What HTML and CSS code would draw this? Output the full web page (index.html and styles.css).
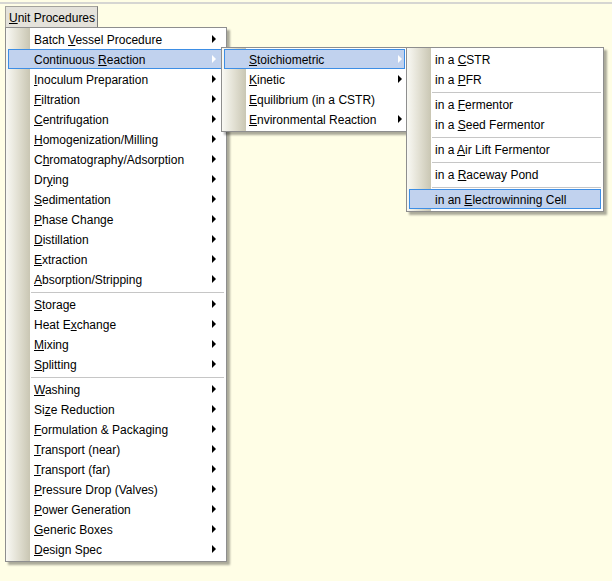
FILE: index.html
```html
<!DOCTYPE html>
<html lang="en">
<head>
    <meta charset="UTF-8">
    <title>Unit Procedures</title>
    <link rel="stylesheet" href="styles.css">
</head>
<body>

<div class="topline"></div>

<div class="menubar">
    <div class="menu-root">
        <span class="menu-title"><u>U</u>nit Procedures</span>

        <ul class="menu main">
            <li class="item sub">Batch <u>V</u>essel Procedure</li>
            <li class="item sub active">Continuous <u>R</u>eaction
                <ul class="menu level2">
                    <li class="item sub active"><u>S</u>toichiometric
                        <ul class="menu level3">
                            <li class="item">in a <u>C</u>STR</li>
                            <li class="item">in a <u>P</u>FR</li>
                            <li class="sep"></li>
                            <li class="item">in a <u>F</u>ermentor</li>
                            <li class="item">in a <u>S</u>eed Fermentor</li>
                            <li class="sep"></li>
                            <li class="item">in a <u>A</u>ir Lift Fermentor</li>
                            <li class="sep"></li>
                            <li class="item">in a <u>R</u>aceway Pond</li>
                            <li class="sep"></li>
                            <li class="item active">in an <u>E</u>lectrowinning Cell</li>
                        </ul>
                    </li>
                    <li class="item sub"><u>K</u>inetic</li>
                    <li class="item"><u>E</u>quilibrium (in a CSTR)</li>
                    <li class="item sub"><u>E</u>nvironmental Reaction</li>
                </ul>
            </li>
            <li class="item sub"><u>I</u>noculum Preparation</li>
            <li class="item sub"><u>F</u>iltration</li>
            <li class="item sub"><u>C</u>entrifugation</li>
            <li class="item sub"><u>H</u>omogenization/Milling</li>
            <li class="item sub">C<u>h</u>romatography/Adsorption</li>
            <li class="item sub">Dr<u>y</u>ing</li>
            <li class="item sub"><u>S</u>edimentation</li>
            <li class="item sub"><u>P</u>hase Change</li>
            <li class="item sub"><u>D</u>istillation</li>
            <li class="item sub"><u>E</u>xtraction</li>
            <li class="item sub"><u>A</u>bsorption/Stripping</li>
            <li class="sep"></li>
            <li class="item sub"><u>S</u>torage</li>
            <li class="item sub">Heat E<u>x</u>change</li>
            <li class="item sub"><u>M</u>ixing</li>
            <li class="item sub"><u>S</u>plitting</li>
            <li class="sep"></li>
            <li class="item sub"><u>W</u>ashing</li>
            <li class="item sub">Si<u>z</u>e Reduction</li>
            <li class="item sub"><u>F</u>ormulation &amp; Packaging</li>
            <li class="item sub"><u>T</u>ransport (near)</li>
            <li class="item sub"><u>T</u>ransport (far)</li>
            <li class="item sub"><u>P</u>ressure Drop (Valves)</li>
            <li class="item sub"><u>P</u>ower Generation</li>
            <li class="item sub"><u>G</u>eneric Boxes</li>
            <li class="item sub"><u>D</u>esign Spec</li>
        </ul>
    </div>
</div>

</body>
</html>
```

FILE: styles.css
```css
/* Reset */
* {
    margin: 0;
    padding: 0;
    box-sizing: border-box;
}

body {
    font-family: 'Liberation Sans', Arial, sans-serif;
    font-size: 12px;
    color: #000;
    background-color: #fffee6;
    height: 100vh;
    overflow: hidden;
}

.topline {
    height: 4px;
    border-bottom: 2px solid #d6d6d2;
}

/* Menu bar */
.menubar {
    padding: 2px 0 0 5px;
}

.menu-root {
    position: relative;
    display: inline-block;
}

.menu-title {
    display: block;
    height: 21px;
    padding: 2px 2px 0 3px;
    line-height: 18px;
    background-color: #e4e2db;
    border: 1px solid #a4a39c;
    border-right-color: #7c7c7c;
    border-bottom: none;
}

/* Popup menus */
.menu {
    position: absolute;
    list-style: none;
    padding: 1px 2px 2px;
    border: 1px solid #8e8e8e;
    background: linear-gradient(to right, #f9f9f4 0, #e2e0d3 12px, #c9c6b3 24px, #fff 24px);
    box-shadow: 3px 3px 2px rgba(0, 0, 0, 0.33);
}

.main {
    top: 21px;
    left: 0;
    width: 222px;
}

.level2 {
    top: -3px;
    left: 212px;
    width: 187px;
}

.level3 {
    top: -3px;
    left: 181px;
    width: 198px;
}

.item {
    position: relative;
    height: 20px;
    line-height: 20px;
    padding-left: 25px;
    white-space: nowrap;
    border: 1px solid transparent;
}

.level2 > .item {
    padding-left: 24px;
}

.item.active {
    background-color: #c1d2ee;
    border-color: #3d8ee5;
}

/* Submenu arrow */
.item.sub::after {
    content: '';
    position: absolute;
    top: 5px;
    right: 7px;
    border-left: 4px solid #000;
    border-top: 4px solid transparent;
    border-bottom: 4px solid transparent;
}

.level2 > .item.sub::after {
    right: 2px;
}

.item.sub.active::after {
    border-left-color: #fff;
}

.sep {
    height: 5px;
    padding: 3px 0 0 23px;
}

.sep::after {
    content: '';
    display: block;
    height: 1px;
    background-color: #c6c6c6;
}
```
